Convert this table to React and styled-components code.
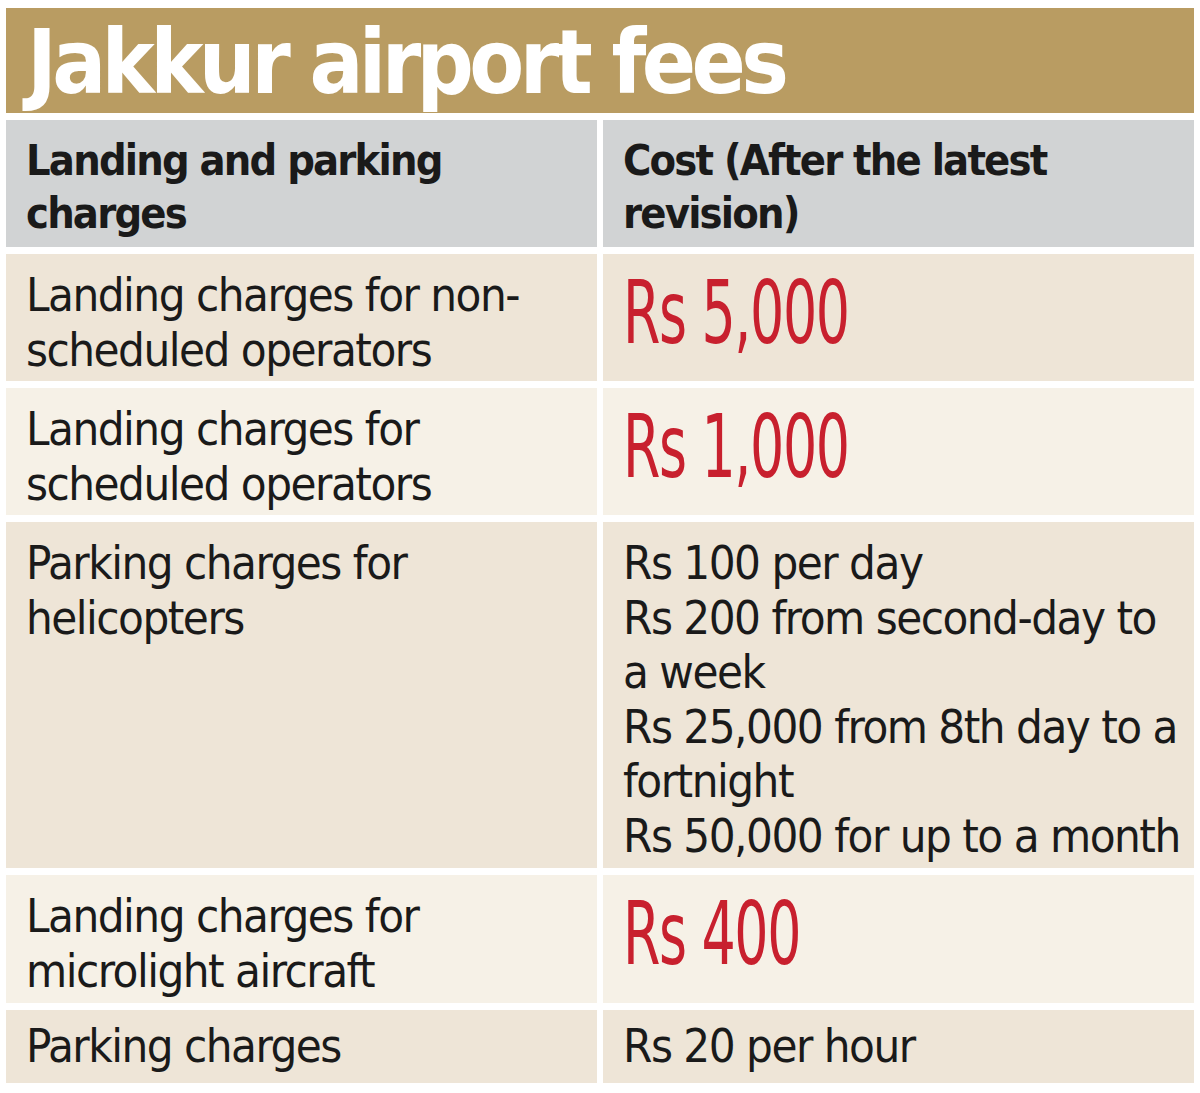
import React from "react";
import styled, { createGlobalStyle } from "styled-components";

const Global = createGlobalStyle`
  html, body { margin: 0; padding: 0; background: #ffffff; }
  body { font-family: "DejaVu Sans Condensed", "Liberation Sans", sans-serif; }
`;

const Page = styled.div`
  width: 1188px;
  margin: 8px 6px 0 6px;
  display: flex;
  flex-direction: column;
  gap: 7px;
`;

const TitleBar = styled.div`
  background: #b99c62;
  height: 105px;
  display: flex;
  align-items: center;
  padding-left: 21px;
  box-sizing: border-box;
`;

const Title = styled.h1`
  margin: 0;
  color: #ffffff;
  font-family: "DejaVu Sans Condensed", "Liberation Sans", sans-serif;
  font-weight: 700;
  font-size: 89px;
  line-height: 1;
  letter-spacing: -4.6px;
  white-space: nowrap;
  position: relative;
  top: 2px;
`;

const Table = styled.div`
  display: grid;
  grid-template-columns: 591px 591px;
  column-gap: 6px;
  row-gap: 7px;
`;

const Cell = styled.div`
  background: ${(p) => p.$bg};
  height: ${(p) => p.$h}px;
  box-sizing: border-box;
  padding: ${(p) => p.$pt ?? 14}px 6px 0 20px;
  color: #1a1a1a;
  font-family: "DejaVu Sans Condensed", "Liberation Sans", sans-serif;
  font-size: ${(p) => (p.$head ? 43 : 47)}px;
  font-weight: ${(p) => (p.$head ? 700 : 400)};
  letter-spacing: ${(p) => (p.$head ? "-1.8px" : "-1.5px")};
  line-height: ${(p) => (p.$head ? "53px" : "54.5px")};
  white-space: nowrap;
  overflow: hidden;
`;

const BigPrice = styled.span`
  display: inline-block;
  color: #c8202e;
  font-family: "DejaVu Sans Condensed", "Liberation Sans", sans-serif;
  font-size: 88px;
  font-weight: 400;
  line-height: 1;
  letter-spacing: -2px;
  white-space: nowrap;
  transform: scaleX(0.68);
  transform-origin: left center;
`;

const GRAY = "#d1d3d4";
const DARK = "#eee5d7";
const LIGHT = "#f6f1e7";

const rows = [
  { h: 127, bg: GRAY, head: true, a: <>Landing and parking<br />charges</>, b: <>Cost (After the latest<br />revision)</> },
  { h: 127, bg: DARK, a: <>Landing charges for non-<br />scheduled operators</>, b: "Rs 5,000", big: true },
  { h: 127, bg: LIGHT, a: <>Landing charges for<br />scheduled operators</>, b: "Rs 1,000", big: true },
  {
    h: 346, bg: DARK, a: <>Parking charges for<br />helicopters</>,
    b: <>Rs 100 per day<br />Rs 200 from second-day to<br />a week<br />Rs 25,000 from 8th day to a<br />fortnight<br />Rs 50,000 for up to a month</>,
  },
  { h: 128, bg: LIGHT, a: <>Landing charges for<br />microlight aircraft</>, b: "Rs 400", big: true },
  { h: 73, bg: DARK, a: "Parking charges", b: "Rs 20 per hour", pt: 9 },
];

export default function App() {
  return (
    <>
      <Global />
      <Page>
        <TitleBar>
          <Title>Jakkur airport fees</Title>
        </TitleBar>
        <Table>
          {rows.map((r, i) => (
            <React.Fragment key={i}>
              <Cell $bg={r.bg} $h={r.h} $head={r.head} $pt={r.pt}>{r.a}</Cell>
              <Cell $bg={r.bg} $h={r.h} $head={r.head} $pt={r.big ? 15 : r.pt}>
                {r.big ? <BigPrice>{r.b}</BigPrice> : r.b}
              </Cell>
            </React.Fragment>
          ))}
        </Table>
      </Page>
    </>
  );
}
